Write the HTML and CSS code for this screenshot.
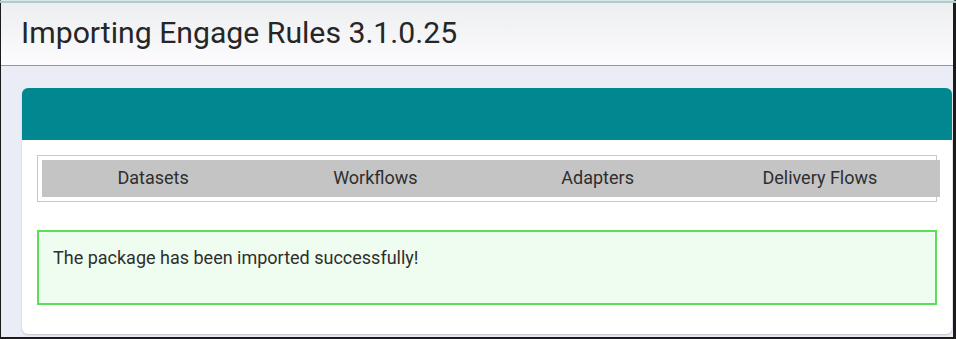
FILE: index.html
```html
<!DOCTYPE html>
<html>
<head>
<meta charset="utf-8">
<link rel="stylesheet" href="styles.css">
</head>
<body>
<div class="frame">
  <header class="page-header">
    <h1 class="title">Importing Engage Rules 3.1.0.25</h1>
  </header>
  <main class="content">
    <section class="card">
      <div class="card-head"></div>
      <div class="card-body">
        <div class="tabs-box">
          <ul class="tabs">
            <li class="tab">Datasets</li>
            <li class="tab">Workflows</li>
            <li class="tab">Adapters</li>
            <li class="tab">Delivery Flows</li>
          </ul>
        </div>
        <div class="alert-success">The package has been imported successfully!</div>
      </div>
    </section>
  </main>
</div>
</body>
</html>
```
FILE: styles.css
```css
* { box-sizing: border-box; }
html, body { margin: 0; padding: 0; }
body {
  width: 956px;
  height: 339px;
  overflow: hidden;
  font-family: Roboto, "Liberation Sans", sans-serif;
  color: #333;
  background: #e3e8ea;
}
.frame {
  height: 339px;
  border-top: 1px solid #dfe5e7;
  border-left: 1px solid #1b1b1b;
  border-right: 3px solid #1b1b1b;
  border-bottom: 2px solid #1b1b1b;
  background: #eaedf5;
  display: flex;
  flex-direction: column;
  position: relative;
}
.frame::before {
  content: "";
  position: absolute;
  left: -1px; right: -3px; top: 0;
  height: 2px;
  background: #a9cdd1;
}
.page-header {
  height: 65px;
  flex: none;
  padding-top: 1px;
  background: linear-gradient(#eceef0, #fdfbfd);
  border-bottom: 1px solid #9a9a9a;
  display: flex;
  align-items: center;
}
.title {
  margin: 0 0 0 20px;
  font-size: 30.2px;
  font-weight: 400;
  color: #262626;
  line-height: 1;
}
.content {
  flex: 1;
  padding: 22px 1px 3px 21px;
}
.card {
  height: 246px;
  background: #fff;
  border-radius: 6px;
  box-shadow: 0 1px 2px rgba(0,0,0,0.18);
  overflow: hidden;
}
.card-head {
  height: 52px;
  background: #00878f;
}
.card-body {
  padding: 15px 15px 28px 15px;
}
.tabs-box {
  height: 47px;
  border: 1px solid #c8c8c8;
  padding: 4px 0 0 4px;
}
.tabs {
  list-style: none;
  margin: 0;
  padding: 0 9px 2px 0;
  width: 898px;
  height: 37px;
  background: #c4c4c4;
  display: grid;
  grid-template-columns: repeat(4, 1fr);
  align-items: center;
}
.tab {
  text-align: center;
  font-size: 18px;
  color: #2e2e2e;
}
.alert-success {
  margin-top: 28px;
  height: 75px;
  border: 2px solid #5edd58;
  background: #effdf0;
  padding: 15px 14px;
  font-size: 18px;
  color: #2e2e2e;
}
```
